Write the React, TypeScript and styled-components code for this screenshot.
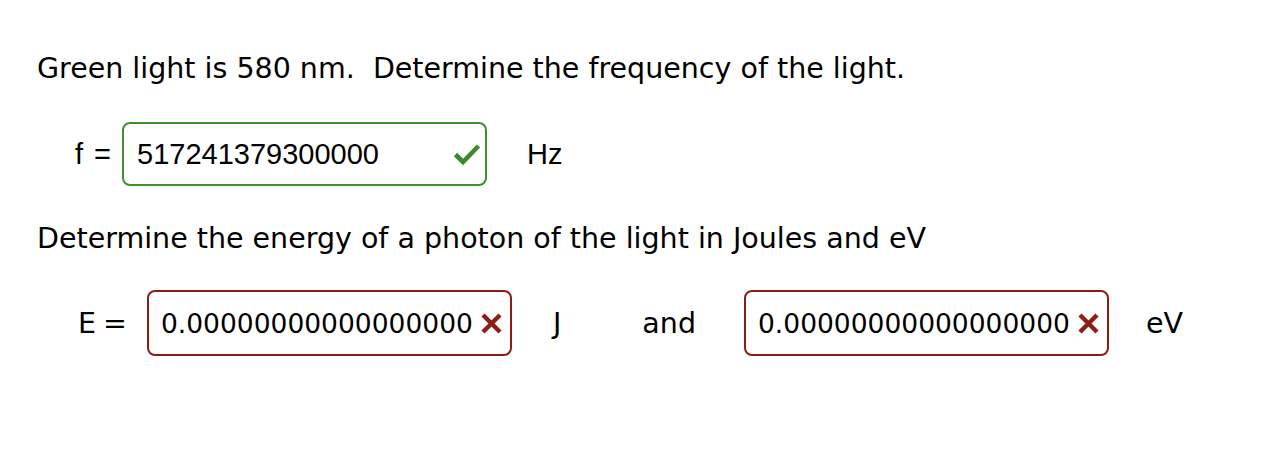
import React from 'react';
import styled, { createGlobalStyle } from 'styled-components';

const Global = createGlobalStyle`
  body {
    margin: 0;
    background: #fff;
    color: #000;
    font-family: "DejaVu Sans", "Noto Sans", sans-serif;
  }
`;

const Page = styled.div`
  padding: 49px 0 0 37px;
`;

const Prompt = styled.p`
  margin: 0;
  font-size: 28.5px;
  line-height: 40px;
  white-space: nowrap;
`;

const AnswerRow = styled.div<{ $top: number; $bottom: number }>`
  display: flex;
  align-items: center;
  margin: ${(p) => p.$top}px 0 ${(p) => p.$bottom}px;
`;

const Label = styled.span<{ $arial?: boolean; $left: number; $right: number }>`
  font-family: ${(p) => (p.$arial ? '"Liberation Sans", Arial, sans-serif' : '"DejaVu Sans", sans-serif')};
  font-size: ${(p) => (p.$arial ? '29px' : '28.5px')};
  word-spacing: ${(p) => (p.$arial ? '3px' : '-2px')};
  margin-left: ${(p) => p.$left}px;
  margin-right: ${(p) => p.$right}px;
  white-space: pre;
`;

const AnswerBox = styled.div<{ $status: 'correct' | 'wrong' }>`
  box-sizing: border-box;
  display: flex;
  align-items: center;
  width: 365px;
  height: ${(p) => (p.$status === 'correct' ? 64 : 66)}px;
  border: 2px solid ${(p) => (p.$status === 'correct' ? '#3f8f2f' : '#8e1c12')};
  border-radius: 8px;
  padding: 0 ${(p) => (p.$status === 'correct' ? 4 : 8)}px 0 ${(p) => (p.$status === 'correct' ? 13 : 12)}px;
  background: #fff;
`;

const AnswerText = styled.span<{ $arial?: boolean }>`
  flex: 1;
  overflow: hidden;
  white-space: nowrap;
  font-family: ${(p) => (p.$arial ? '"Liberation Sans", Arial, sans-serif' : '"DejaVu Sans", sans-serif')};
  font-size: ${(p) => (p.$arial ? '29px' : '26.5px')};
`;

const Icon = styled.svg<{ $gap: number }>`
  flex: none;
  margin-left: ${(p) => p.$gap}px;
`;

const Check = () => (
  <Icon $gap={6} width="28" height="22" viewBox="0 0 28 22">
    <path d="M2.5 11.5 L10 19 L25.5 3" fill="none" stroke="#3b8a2b" strokeWidth="4.6" strokeLinecap="butt" />
  </Icon>
);

const Cross = () => (
  <Icon $gap={9} width="21" height="21" viewBox="0 0 21 21">
    <path d="M2 2 L19 19 M19 2 L2 19" fill="none" stroke="#8f1d13" strokeWidth="4.4" />
  </Icon>
);

export default function App() {
  return (
    <Page>
      <Global />
      <Prompt>Green light is 580 nm.&nbsp; Determine the frequency of the light.</Prompt>
      <AnswerRow $top={33} $bottom={33}>
        <Label $arial $left={38} $right={11}>f =</Label>
        <AnswerBox $status="correct">
          <AnswerText $arial>517241379300000</AnswerText>
          <Check />
        </AnswerBox>
        <Label $arial $left={40} $right={0}>Hz</Label>
      </AnswerRow>
      <Prompt>Determine the energy of a photon of the light in Joules and eV</Prompt>
      <AnswerRow $top={31} $bottom={0}>
        <Label $left={41} $right={20}>E =</Label>
        <AnswerBox $status="wrong">
          <AnswerText>0.0000000000000000003427</AnswerText>
          <Cross />
        </AnswerBox>
        <Label $left={41} $right={0}>J</Label>
        <Label $left={81} $right={48}>and</Label>
        <AnswerBox $status="wrong">
          <AnswerText>0.000000000000000000214</AnswerText>
          <Cross />
        </AnswerBox>
        <Label $left={37} $right={0}>eV</Label>
      </AnswerRow>
    </Page>
  );
}
